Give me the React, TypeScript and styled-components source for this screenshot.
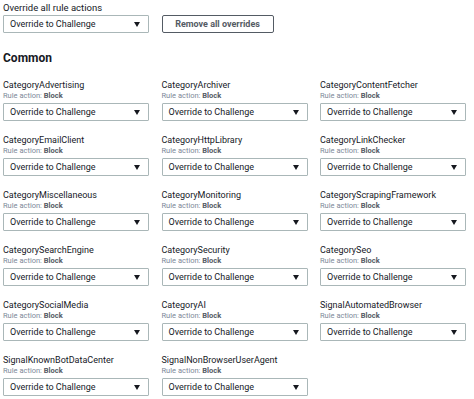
import React from 'react';
import styled, { createGlobalStyle } from 'styled-components';

const GlobalStyle = createGlobalStyle`
  html, body {
    margin: 0;
    padding: 0;
    background: #fff;
  }
  body {
    font-family: Roboto, 'Liberation Sans', Arial, sans-serif;
    color: #16191f;
  }
`;

const rules = [
  'CategoryAdvertising',
  'CategoryArchiver',
  'CategoryContentFetcher',
  'CategoryEmailClient',
  'CategoryHttpLibrary',
  'CategoryLinkChecker',
  'CategoryMiscellaneous',
  'CategoryMonitoring',
  'CategoryScrapingFramework',
  'CategorySearchEngine',
  'CategorySecurity',
  'CategorySeo',
  'CategorySocialMedia',
  'CategoryAI',
  'SignalAutomatedBrowser',
  'SignalKnownBotDataCenter',
  'SignalNonBrowserUserAgent',
];

function Caret() {
  return (
    <svg width="6" height="5" viewBox="0 0 6 5">
      <path d="M0 0 H6 L3 5 Z" fill="#16191f" />
    </svg>
  );
}

function OverrideSelect() {
  return (
    <Select>
      <span>Override to Challenge</span>
      <Caret />
    </Select>
  );
}

export default function App() {
  return (
    <>
      <GlobalStyle />
      <Page>
        <FieldLabel>Override all rule actions</FieldLabel>
        <TopRow>
          <OverrideSelect />
          <RemoveButton>Remove all overrides</RemoveButton>
        </TopRow>

        <SectionTitle>Common</SectionTitle>

        <RuleGrid>
          {rules.map((name) => (
            <RuleCell key={name}>
              <RuleName>{name}</RuleName>
              <RuleAction>
                Rule action: <b>Block</b>
              </RuleAction>
              <OverrideSelect />
            </RuleCell>
          ))}
        </RuleGrid>
      </Page>
    </>
  );
}

const Page = styled.div`
  width: 474px;
  padding: 2px 8px 0 3px;
  box-sizing: border-box;
`;

const FieldLabel = styled.div`
  font-size: 9.5px;
  line-height: 11px;
  height: 11px;
`;

const TopRow = styled.div`
  display: grid;
  grid-template-columns: 146px 112px;
  column-gap: 12.5px;
  margin-top: 2px;
`;

const Select = styled.div`
  box-sizing: border-box;
  height: 18px;
  border: 1px solid #aab7b8;
  border-radius: 1px;
  background: #fff;
  display: flex;
  align-items: center;
  justify-content: space-between;
  padding: 0 8px 0 6px;
  font-size: 9px;
  color: #16191f;

  svg {
    flex: none;
  }
`;

const RemoveButton = styled.button`
  box-sizing: border-box;
  height: 18px;
  border: 1px solid #545b64;
  border-radius: 2px;
  background: #fff;
  color: #545b64;
  font-family: inherit;
  font-size: 9px;
  font-weight: 700;
  padding: 0;
  cursor: pointer;
`;

const SectionTitle = styled.h2`
  margin: 18px 0 0;
  height: 14px;
  font-size: 12px;
  line-height: 14px;
  font-weight: 700;
`;

const RuleGrid = styled.div`
  display: grid;
  grid-template-columns: repeat(3, 146px);
  grid-auto-rows: 41px;
  column-gap: 12.5px;
  row-gap: 14px;
  margin-top: 15px;
`;

const RuleCell = styled.div`
  display: flex;
  flex-direction: column;
`;

const RuleName = styled.div`
  font-size: 9px;
  line-height: 11px;
  height: 11px;
  white-space: nowrap;
`;

const RuleAction = styled.div`
  font-size: 7.5px;
  line-height: 10px;
  height: 10px;
  color: #7d8998;
  margin-bottom: 2px;

  b {
    color: #545b64;
    font-weight: 700;
  }
`;
